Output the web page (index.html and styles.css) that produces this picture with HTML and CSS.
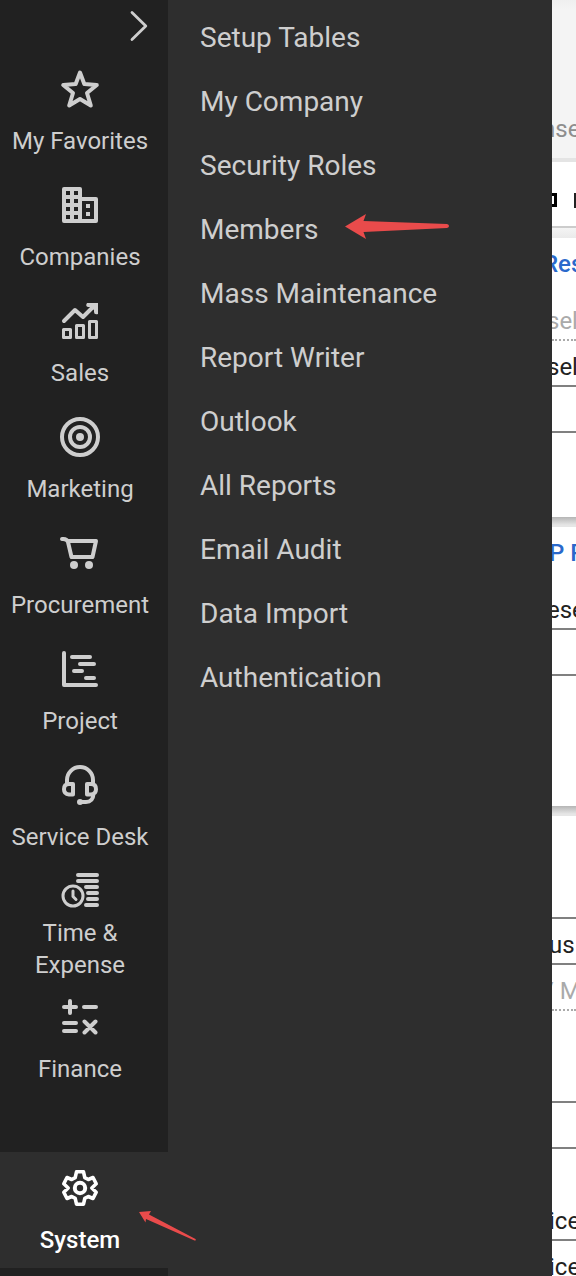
FILE: index.html
```html
<!DOCTYPE html>
<html lang="en">
<head>
<meta charset="utf-8">
<title>System menu</title>
<link rel="stylesheet" href="styles.css">
</head>
<body>
<div class="app">
  <nav class="rail">
    <div class="rail-top"><svg class="chevron" viewBox="0 0 20 32"><path d="M2 2.500L15.800 16L2 29.500"/></svg></div>
    <a class="item"><svg class="icon" viewBox="0 0 48 48"><path class="line w4" d="M24 7.500L28.300 19L40.800 20L31 28L34.800 40.500L24 34L13.200 40.500L17 28L7.200 20L19.700 19Z"/></svg><span>My Favorites</span></a>
    <a class="item"><svg class="icon" viewBox="0 0 48 48"><path class="fill" fill-rule="evenodd" d="M8 6H24Q26 6 26 8V16H40Q42 16 42 18V40Q42 42 40 42H8Q6 42 6 40V8Q6 6 8 6ZM10 10v4h4v-4ZM18 10v4h4v-4ZM10 18v4h4v-4ZM18 18v4h4v-4ZM10 26v4h4v-4ZM18 26v4h4v-4ZM10 34v4h4v-4ZM18 34v4h4v-4ZM26 20v18h12V20ZM30 23h4v4h-4ZM30 31h4v4h-4Z"/></svg><span>Companies</span></a>
    <a class="item"><svg class="icon" viewBox="0 0 48 48"><path class="line w4" d="M8 24L19 13L27 20L38 9"/><path class="fill" d="M31 6H42V17Q38 18 38 15V13L35 10H32Q29 9 31 6Z"/><path class="line w3" d="M7.500 32.500h7v8h-7ZM20.500 28.500h7v12h-7ZM33.500 24.500h7v16h-7Z"/></svg><span>Sales</span></a>
    <a class="item"><svg class="icon" viewBox="0 0 48 48"><circle class="line w4" cx="24" cy="24" r="18"/><circle class="line w4" cx="24" cy="24" r="10"/><circle class="fill" cx="24" cy="24" r="4"/></svg><span>Marketing</span></a>
    <a class="item"><svg class="icon" viewBox="0 0 48 48"><path class="line w4" d="M6 10Q11 9.500 12 13L15.500 28H36.500L40 12H12"/><circle class="fill" cx="18" cy="36" r="4"/><circle class="fill" cx="33" cy="36" r="4"/></svg><span>Procurement</span></a>
    <a class="item"><svg class="icon" viewBox="0 0 48 48"><path class="line w4" d="M8 8V40H40M16 12H34M24 19H38M18 26H26M30 33H38"/></svg><span>Project</span></a>
    <a class="item"><svg class="icon" viewBox="0 0 48 48"><path class="line w4" d="M11 23V19A13 13 0 0 1 37 19V23M17 23V33.500H13Q8 33 8 28.300Q8 23 13 23ZM31 23V33.500H35Q40 33 40 28.300Q40 23 35 23ZM37.500 33Q37 41 30 41H24"/><circle class="fill" cx="24" cy="41" r="3"/></svg><span>Service Desk</span></a>
    <a class="item two-line"><svg class="icon" viewBox="0 0 48 48"><circle class="line w3" cx="17" cy="30" r="10"/><path class="line w3" d="M17 25V30.500L20 33.500"/><path class="line w4" d="M22 9H41M22 15H41M30 21H41M32 27H41M32 33H41M30 39H41"/></svg><span>Time &amp;<br>Expense</span></a>
    <a class="item"><svg class="icon" viewBox="0 0 48 48"><path class="line w4" d="M8 14H20M14 8V20M28 14H40M8 30H20M8 38H20M28.500 28.500L39.500 39.500M39.500 28.500L28.500 39.500"/></svg><span>Finance</span></a>
    <a class="item active"><svg class="icon" viewBox="0 0 48 48"><path class="line gear" d="M20.500 7.800H27.500L28.800 13.600L32.300 15.500L37 13.500L40.200 19.800L35.800 24L40.200 28.200L37 34.500L32.300 32.500L28.800 34.400L27.500 40.200H20.500L19.200 34.400L15.700 32.500L11 34.500L7.800 28.200L12.200 24L7.800 19.800L11 13.500L15.700 15.500L19.200 13.600Z"/><circle class="line w4" cx="24" cy="24" r="5.200"/></svg><span>System</span></a>
  </nav>
  <ul class="menu">
    <li>Setup Tables</li>
    <li>My Company</li>
    <li>Security Roles</li>
    <li>Members</li>
    <li>Mass Maintenance</li>
    <li>Report Writer</li>
    <li>Outlook</li>
    <li>All Reports</li>
    <li>Email Audit</li>
    <li>Data Import</li>
    <li>Authentication</li>
  </ul>
  <main class="page">
    <header class="crumb"><span>nse</span></header>
    <div class="toolbar"><svg viewBox="0 0 24 64"><path d="M-6 32.500H3.500V43.500H-6" fill="none" stroke="#000" stroke-width="3"/><path d="M22 31h2v15h-2z" fill="#222"/></svg></div>
    <div class="gap"></div>
    <section class="card c1">
      <h2>Res</h2>
      <div class="field muted"><span>sel</span></div>
      <div class="field"><span>sel</span></div>
      <div class="field"></div>
    </section>
    <section class="card c2">
      <h2 class="h-p">P R</h2>
      <div class="field"><span>ese</span></div>
      <div class="field"></div>
    </section>
    <section class="card c3">
      <div class="field"></div>
      <div class="field"><span class="us">us</span></div>
      <div class="field muted"><span class="slash">/ M</span></div>
      <div class="field plain"></div>
      <div class="field"></div>
      <div class="field"></div>
      <div class="field plain"></div>
      <div class="field"><span class="ice">ice</span></div>
      <div class="field"><span class="ice">ice</span></div>
    </section>
  </main>
  <svg class="arrows" viewBox="0 0 576 1276"><path d="M345 226.500L366 214L363.500 221L447 224Q449 224.500 449 226T447 228L363.500 232L366 239Z"/><path d="M139 1212L151 1211L149 1214.500L195.500 1239Q196.500 1240.500 194.500 1240.500L146 1219L145.500 1222.500Z"/></svg>
</div>
</body>
</html>
```
FILE: styles.css
```css
* { box-sizing: border-box; }
body { margin: 0; font-family: Roboto, "Liberation Sans", sans-serif; }
.app { position: relative; display: grid; grid-template-columns: 168px 384px 24px; height: 1276px; overflow: hidden; }

.rail { display: flex; flex-direction: column; background: #212121; color: #cecece; }
.rail-top { height: 53px; flex: none; padding: 10px 18px 0 0; display: flex; justify-content: flex-end; align-items: flex-start; }
.chevron { width: 20px; height: 32px; fill: none; stroke: currentColor; stroke-width: 2.8; stroke-linecap: round; stroke-linejoin: round; }
.item { height: 116px; flex: none; padding: 12px 8px 0 0; display: flex; flex-direction: column; align-items: center; gap: 12px; font-size: 24px; line-height: 32px; text-align: center; }
.item span { white-space: nowrap; }
.two-line { padding-top: 1px; gap: 3px; }
.active { margin-top: 55px; background: #2e2e2e; color: #fff; font-weight: 500; }
.icon { width: 48px; height: 48px; flex: none; }
.line { fill: none; stroke: currentColor; stroke-linecap: round; stroke-linejoin: round; }
.w4 { stroke-width: 4; }
.w3 { stroke-width: 3; }
.gear { stroke-width: 3.6; }
.fill { fill: currentColor; }

.menu { list-style: none; margin: 0; padding: 6px 0 0 32px; background: #2e2e2e; color: #cecece; font-size: 28px; }
.menu li { height: 64px; line-height: 64px; white-space: nowrap; }

.page { display: flex; flex-direction: column; overflow: hidden; background: #fff; font-size: 24px; white-space: nowrap; color: #222; }
.crumb { height: 162px; flex: none; background: linear-gradient(#efefef, #f4f4f4 10px); border-bottom: 4px solid #e4e4e4; color: #8e8e8e; padding-top: 113px; line-height: 32px; }
.crumb span { margin-left: -10px; }
.toolbar { height: 66px; flex: none; padding-bottom: 2px; border-bottom: 2px solid #ccc; }
.toolbar svg { display: block; width: 24px; height: 64px; }
.gap { height: 10px; flex: none; background: linear-gradient(#f4f4f4, #eaeaea); }
.card { flex: none; }
.c1, .c2 { height: 289px; padding-top: 10px; background: linear-gradient(#b5b5b5, #e6e6e6 8px) bottom / 100% 10px no-repeat; }
.c3 { height: 471px; padding-top: 57px; }
h2 { margin: 0 0 0 -9px; height: 47px; font-size: 24px; font-weight: 500; line-height: 32px; color: #2a69cb; }
.h-p { margin-left: -3px; }
.field { height: 46px; padding-top: 4px; border-bottom: 2px solid #808080; line-height: 44px; overflow: hidden; }
.field span { margin-left: -5px; }
.field .us, .field .ice { margin-left: -3px; }
.field .slash { margin-left: -8px; }
.muted { color: #aaa; border-bottom: 2px dotted #aaa; }
.plain { border-color: transparent; }

.arrows { position: absolute; left: 0; top: 0; width: 576px; height: 1276px; fill: #e94b4b; pointer-events: none; }
```
